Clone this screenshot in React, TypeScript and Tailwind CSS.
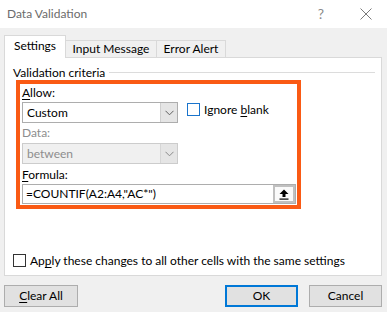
import React from "react";

const Chevron = ({ color = "#606060" }: { color?: string }) => (
  <svg width="9" height="6" viewBox="0 0 9 6">
    <path d="M0.5 0.8 L4.5 4.8 L8.5 0.8" fill="none" stroke={color} strokeWidth="1" />
  </svg>
);

const U = ({ children }: { children: React.ReactNode }) => <span className="underline underline-offset-2">{children}</span>;

export default function App() {
  return (
    <div
      className="w-[387px] h-[312px] bg-[#f0f0f0] flex flex-col text-[12px] text-black overflow-hidden"
      style={{ fontFamily: 'Lato, "Noto Sans", sans-serif' }}
    >
      {/* title bar */}
      <div className="h-[28px] bg-white flex items-center pl-[7px] shrink-0">
        <span className="text-[12px] text-[#6b6b6b] leading-none">Data Validation</span>
        <span className="ml-auto mr-[36px] text-[#8a8a8a] text-[14px] leading-none">?</span>
        <svg width="12" height="12" viewBox="0 0 12 12" className="mr-[15px]">
          <path d="M0.5 0.5 L11.5 11.5 M11.5 0.5 L0.5 11.5" stroke="#7a7a7a" strokeWidth="1" />
        </svg>
      </div>

      {/* tabs */}
      <div className="mt-[7px] h-[22px] flex items-end pl-[4px] shrink-0">
        <div className="relative z-10 -mb-px h-[23px] w-[62px] bg-white border-l border-t border-r border-[#d9d9d9] flex items-center justify-center pb-[2px] leading-none">
          Settings
        </div>
        <div className="h-[17px] w-[91px] bg-[#f0f0f0] border-t border-r border-[#d9d9d9] flex items-center justify-center leading-none">
          Input Message
        </div>
        <div className="h-[17px] w-[69px] bg-[#f0f0f0] border-t border-r border-[#d9d9d9] flex items-center justify-center leading-none">
          Error Alert
        </div>
      </div>

      {/* panel */}
      <div className="ml-[4px] w-[378px] h-[219px] bg-white border border-[#d9d9d9] flex flex-col shrink-0">
        <div className="mt-[7px] h-[15px] flex items-center pl-[8px] pr-[6px]">
          <span className="leading-[15px]">Validation criteria</span>
          <div className="flex-1 h-px bg-[#dcdcdc] ml-[4px]" />
        </div>

        <div className="ml-[11px] w-[285px] h-[129px] border-4 border-[#fa5a14] flex flex-col">
          <div className="mt-[1px] h-[16px] pl-[2px] leading-[16px]">
            <U>A</U>llow:
          </div>
          <div className="mt-[1px] flex items-start pl-[2px]">
            <div className="w-[156px] h-[21px] border border-[#adadad] bg-white flex">
              <div className="flex-1 pl-[4px] leading-[19px]">Custom</div>
              <div className="w-[17px] h-[19px] bg-[#e5e5e5] border-l border-[#cfcfcf] flex items-center justify-center">
                <Chevron />
              </div>
            </div>
            <div className="ml-[9px] mt-[1px] w-[13px] h-[13px] border border-[#1a74cc] bg-white" />
            <div className="ml-[4px] leading-[15px]">
              Ignore <U>b</U>lank
            </div>
          </div>
          <div className="mt-[2px] h-[16px] pl-[2px] leading-[16px] text-[#8d8d8d]">Data:</div>
          <div className="mt-[2px] pl-[2px]">
            <div className="w-[156px] h-[21px] border border-[#cccccc] bg-[#f0f0f0] flex">
              <div className="flex-1 pl-[4px] leading-[19px] text-[#8d8d8d]">between</div>
              <div className="w-[17px] h-[19px] bg-[#e5e5e5] border-l border-[#d6d6d6] flex items-center justify-center">
                <Chevron color="#8a8a8a" />
              </div>
            </div>
          </div>
          <div className="mt-[3px] h-[16px] pl-[2px] leading-[16px]">
            <U>F</U>ormula:
          </div>
          <div className="mt-[1px] pl-[2px]">
            <div className="w-[274px] h-[20px] border border-[#adadad] bg-white flex">
              <div className="flex-1 pl-[3px] leading-[18px]">=COUNTIF(A2:A4,"AC*")</div>
              <div className="w-[22px] h-[18px] border-2 border-[#c0c0c0] bg-[#fafafa] flex items-center justify-center">
                <svg width="10" height="11" viewBox="0 0 10 11">
                  <path d="M5 0.5 L9.5 5 L6.5 5 L6.5 8 L3.5 8 L3.5 5 L0.5 5 Z" fill="#000" />
                  <rect x="0.5" y="9.5" width="9" height="1.2" fill="#000" />
                </svg>
              </div>
            </div>
          </div>
        </div>

        <div className="mt-[44px] flex items-center pl-[8px]">
          <div className="w-[13px] h-[13px] border border-[#333333] bg-white" />
          <div className="ml-[4px] leading-[15px]">
            Ap<U>p</U>ly these changes to all other cells with the same settings
          </div>
        </div>
      </div>

      {/* buttons */}
      <div className="mt-[9px] flex pl-[4px] shrink-0">
        <div className="w-[74px] h-[22px] bg-[#e1e1e1] border border-[#adadad] flex items-center justify-center leading-none">
          <U>C</U>lear All
        </div>
        <div className="ml-[147px] w-[73px] h-[22px] bg-[#e1e1e1] border-2 border-[#0078d7] flex items-center justify-center leading-none">
          OK
        </div>
        <div className="ml-[11px] w-[73px] h-[22px] bg-[#e1e1e1] border border-[#adadad] flex items-center justify-center leading-none">
          Cancel
        </div>
      </div>
    </div>
  );
}
